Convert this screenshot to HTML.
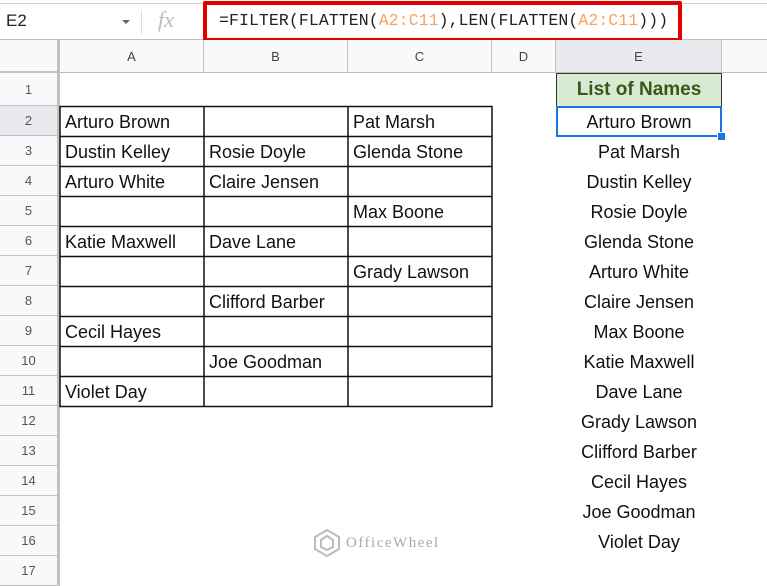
<!DOCTYPE html>
<html><head><style>
body{margin:0;width:767px;height:583px;overflow:hidden;background:#fff;font-family:"Liberation Sans",Arial,sans-serif;position:relative}
.a{position:absolute}
.ch{position:absolute;top:40px;height:33px;line-height:33px;text-align:center;font-size:13px;color:#444;background:#f8f9fa;border-right:1px solid #c0c0c0;border-bottom:1px solid #c0c0c0;box-sizing:border-box}
.rh{position:absolute;left:0;width:60px;text-align:center;font-size:13px;color:#555;background:#f8f9fa;border-bottom:1px solid #c0c0c0;border-right:3px solid #c0c0c0;box-sizing:border-box}
.c{position:absolute;height:30px;line-height:31px;font-size:18px;color:#111;box-sizing:border-box;padding-left:5px;white-space:nowrap}
.e{position:absolute;left:556px;width:166px;height:30px;line-height:31px;text-align:center;font-size:18px;color:#111}
</style></head><body>
<div class="a" style="left:0;top:3px;width:767px;height:1px;background:#d0d0d0"></div>
<div class="a" style="left:0;top:39px;width:767px;height:1px;background:#c0c0c0"></div>
<div class="a" style="left:6px;top:11px;font-size:17px;color:#222">E2</div>
<div class="a" style="left:122px;top:20px;width:0;height:0;border-left:4px solid transparent;border-right:4px solid transparent;border-top:4px solid #666"></div>
<div class="a" style="left:141px;top:10px;width:1px;height:24px;background:#ddd"></div>
<div class="a" style="left:158px;top:7px;font-family:'Liberation Serif',serif;font-style:italic;font-size:22px;color:#bbb">fx</div>
<div class="a" style="left:203px;top:1px;width:479px;height:41px;border:4px solid #e00000;box-sizing:border-box;border-radius:2px"></div>
<div class="a" style="left:219px;top:11px;font-family:'Liberation Mono',monospace;font-size:16.5px;letter-spacing:0.08px;color:#222">=FILTER(FLATTEN(<span style="color:#f4a460">A2:C11</span>),LEN(FLATTEN(<span style="color:#f4a460">A2:C11</span>)))</div>

<div class="a" style="left:0;top:40px;width:60px;height:34px;background:#f8f9fa;border-right:3px solid #c0c0c0;border-bottom:3px solid #c0c0c0;box-sizing:border-box"></div>
<div class="ch" style="left:60px;width:144px">A</div>
<div class="ch" style="left:204px;width:144px">B</div>
<div class="ch" style="left:348px;width:144px">C</div>
<div class="ch" style="left:492px;width:64px">D</div>
<div class="ch" style="left:556px;width:166px;background:#e8eaed">E</div>
<div class="ch" style="left:722px;width:45px;border-right:none"></div>

<div class="rh" style="top:73px;height:33px;line-height:33px">1</div>
<div class="rh" style="top:106px;height:30px;line-height:30px;background:#e8eaed">2</div>
<div class="rh" style="top:136px;height:30px;line-height:30px">3</div>
<div class="rh" style="top:166px;height:30px;line-height:30px">4</div>
<div class="rh" style="top:196px;height:30px;line-height:30px">5</div>
<div class="rh" style="top:226px;height:30px;line-height:30px">6</div>
<div class="rh" style="top:256px;height:30px;line-height:30px">7</div>
<div class="rh" style="top:286px;height:30px;line-height:30px">8</div>
<div class="rh" style="top:316px;height:30px;line-height:30px">9</div>
<div class="rh" style="top:346px;height:30px;line-height:30px">10</div>
<div class="rh" style="top:376px;height:30px;line-height:30px">11</div>
<div class="rh" style="top:406px;height:30px;line-height:30px">12</div>
<div class="rh" style="top:436px;height:30px;line-height:30px">13</div>
<div class="rh" style="top:466px;height:30px;line-height:30px">14</div>
<div class="rh" style="top:496px;height:30px;line-height:30px">15</div>
<div class="rh" style="top:526px;height:30px;line-height:30px">16</div>
<div class="rh" style="top:556px;height:30px;line-height:30px">17</div>

<svg class="a" style="left:59px;top:105px" width="436" height="304">
<g stroke="#111" stroke-width="1.5" fill="none">
<rect x="1" y="1.5" width="432" height="300"/>
<line x1="145" y1="1" x2="145" y2="302"/><line x1="289" y1="1" x2="289" y2="302"/>
<line x1="1" y1="31.5" x2="433" y2="31.5"/><line x1="1" y1="61.5" x2="433" y2="61.5"/><line x1="1" y1="91.5" x2="433" y2="91.5"/><line x1="1" y1="121.5" x2="433" y2="121.5"/><line x1="1" y1="151.5" x2="433" y2="151.5"/><line x1="1" y1="181.5" x2="433" y2="181.5"/><line x1="1" y1="211.5" x2="433" y2="211.5"/><line x1="1" y1="241.5" x2="433" y2="241.5"/><line x1="1" y1="271.5" x2="433" y2="271.5"/>
</g></svg>
<div class="c" style="left:60px;top:107px">Arturo Brown</div>
<div class="c" style="left:348px;top:107px">Pat Marsh</div>
<div class="c" style="left:60px;top:137px">Dustin Kelley</div>
<div class="c" style="left:204px;top:137px">Rosie Doyle</div>
<div class="c" style="left:348px;top:137px">Glenda Stone</div>
<div class="c" style="left:60px;top:167px">Arturo White</div>
<div class="c" style="left:204px;top:167px">Claire Jensen</div>
<div class="c" style="left:348px;top:197px">Max Boone</div>
<div class="c" style="left:60px;top:227px">Katie Maxwell</div>
<div class="c" style="left:204px;top:227px">Dave Lane</div>
<div class="c" style="left:348px;top:257px">Grady Lawson</div>
<div class="c" style="left:204px;top:287px">Clifford Barber</div>
<div class="c" style="left:60px;top:317px">Cecil Hayes</div>
<div class="c" style="left:204px;top:347px">Joe Goodman</div>
<div class="c" style="left:60px;top:377px">Violet Day</div>

<div class="a" style="left:556px;top:73px;width:166px;height:34px;background:#d9ead3;border:1px solid #333;box-sizing:border-box;text-align:center;line-height:32px;font-size:19px;font-weight:bold;color:#38571a">List of Names</div>
<div class="a" style="left:556px;top:106px;width:166px;height:31px;border:2px solid #1a73e8;box-sizing:border-box"></div>
<div class="a" style="left:717px;top:132px;width:7px;height:7px;background:#1a73e8;border:1px solid #fff"></div>
<div class="e" style="top:107px">Arturo Brown</div>
<div class="e" style="top:137px">Pat Marsh</div>
<div class="e" style="top:167px">Dustin Kelley</div>
<div class="e" style="top:197px">Rosie Doyle</div>
<div class="e" style="top:227px">Glenda Stone</div>
<div class="e" style="top:257px">Arturo White</div>
<div class="e" style="top:287px">Claire Jensen</div>
<div class="e" style="top:317px">Max Boone</div>
<div class="e" style="top:347px">Katie Maxwell</div>
<div class="e" style="top:377px">Dave Lane</div>
<div class="e" style="top:407px">Grady Lawson</div>
<div class="e" style="top:437px">Clifford Barber</div>
<div class="e" style="top:467px">Cecil Hayes</div>
<div class="e" style="top:497px">Joe Goodman</div>
<div class="e" style="top:527px">Violet Day</div>

<svg class="a" style="left:312px;top:528px" width="30" height="30"><g fill="none" stroke="#bbb" stroke-width="2"><path d="M15 2 L27 9 L27 21 L15 28 L3 21 L3 9 Z"/><path d="M15 8 L21 12 L21 19 L15 22 L9 19 L9 12 Z"/></g></svg>
<div class="a" style="left:346px;top:535px;font-family:'Liberation Serif',serif;font-size:15px;letter-spacing:1.5px;color:#aaa">OfficeWheel</div>
</body></html>
